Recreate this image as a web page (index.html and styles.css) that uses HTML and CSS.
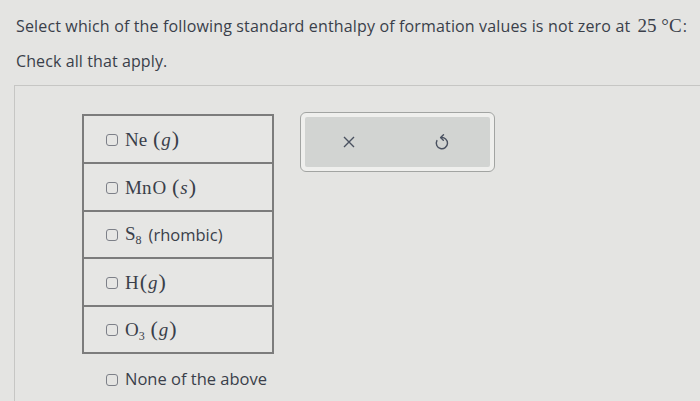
FILE: index.html
```html
<!DOCTYPE html>
<html>
<head>
<meta charset="utf-8">
<link rel="stylesheet" href="styles.css">
</head>
<body>
<div class="page">
  <p class="q">Select which of the following standard enthalpy of formation values is not zero at <span class="m deg">25&nbsp;°C</span>:</p>
  <p class="hint">Check all that apply.</p>
  <div class="panel">
    <div class="left">
      <div class="table">
        <div class="row"><span class="cb"></span><span class="m">Ne <span class="p">(</span><i>g</i><span class="p">)</span></span></div>
        <div class="row"><span class="cb"></span><span class="m">Mn<span class="thin"></span>O <span class="p">(</span><i>s</i><span class="p">)</span></span></div>
        <div class="row"><span class="cb"></span><span class="m">S<sub>8</sub></span><span class="s">(rhombic)</span></div>
        <div class="row"><span class="cb"></span><span class="m">H<span class="p">(</span><i>g</i><span class="p">)</span></span></div>
        <div class="row"><span class="cb"></span><span class="m">O<sub>3</sub> <span class="p">(</span><i>g</i><span class="p">)</span></span></div>
      </div>
      <div class="none"><span class="cb"></span><span class="s">None of the above</span></div>
    </div>
    <div class="tools">
      <div class="tools-inner">
        <svg class="ic-x" width="14" height="14" viewBox="0 0 14 14"><path d="M2 2 L12 12 M12 2 L2 12" stroke="#4a5160" stroke-width="1.4" fill="none"/></svg>
        <svg class="ic-r" width="16" height="19" viewBox="0 0 16 19"><path d="M9.5 1.8 L6.6 4.6 L9.3 7.2" stroke="#4a5160" stroke-width="1.4" fill="none" stroke-linecap="round" stroke-linejoin="round"/><path d="M7 4.6 A5.6 5.6 0 1 1 2.9 7.6" stroke="#4a5160" stroke-width="1.4" fill="none" stroke-linecap="round"/></svg>
      </div>
    </div>
  </div>
</div>
</body>
</html>
```
FILE: styles.css
```css
html, body { margin: 0; padding: 0; }
body {
  background: #e4e4e2;
  width: 700px;
  height: 401px;
  overflow: hidden;
  font-family: "Open Sans", "DejaVu Sans", sans-serif;
  color: #3a3f4a;
}
.page { padding-top: 13px; }
.q {
  margin: 0 0 0 16px;
  font-size: 16px;
  line-height: 26px;
  letter-spacing: 0.15px;
  white-space: nowrap;
}
.q .deg { font-size: 19px; letter-spacing: 0; margin-left: 3px; margin-right: 1px; }
.hint {
  margin: 10px 0 0 16px;
  font-size: 16px;
  line-height: 24px;
  letter-spacing: 0.1px;
}
.m { font-family: "Liberation Serif", "DejaVu Serif", serif; font-size: 19px; color: #3a3f4a; }
.m i { font-style: italic; }
.m .p { font-size: 22px; font-weight: 300; margin: 0 1px; }
.m .thin { display: inline-block; width: 1px; }
.m sub { font-size: 12px; vertical-align: -4px; line-height: 0; }
.s { font-size: 16.5px; }
.panel {
  margin: 12px 0 0 14px;
  border-top: 1.5px solid #c6c6c4;
  border-left: 1.5px solid #c6c6c4;
  height: 320px;
  display: flex;
  align-items: flex-start;
  padding-top: 28px;
  padding-left: 67px;
  box-sizing: border-box;
}
.left { width: 192px; }
.table {
  border: 2px solid #7c7c7c;
}
.row {
  height: 47.5px;
  border-top: 2px solid #7c7c7c;
  display: flex;
  align-items: center;
  padding-left: 22px;
  gap: 7px;
  box-sizing: border-box;
  background: #e6e6e4;
}
.row:first-child { border-top: none; height: 46px; }
.cb {
  width: 10px;
  height: 10px;
  border: 1.5px solid #7d8088;
  border-radius: 3px;
  flex: none;
  margin-top: 2px;
}
.none {
  margin-top: 13px;
  display: flex;
  align-items: center;
  padding-left: 24px;
  gap: 7px;
}
.tools {
  margin-left: 26px;
  margin-top: -2px;
  width: 195px;
  height: 60px;
  border: 1.5px solid #a2a4a2;
  border-radius: 6px;
  background: #efefed;
  padding: 4px;
  box-sizing: border-box;
}
.tools-inner {
  height: 100%;
  background: #d2d4d2;
  border-radius: 2px;
  display: flex;
  align-items: center;
  padding-left: 37px;
  box-sizing: border-box;
}
.ic-x { margin-top: -1px; }
.ic-r { margin-left: 78px; }
```
